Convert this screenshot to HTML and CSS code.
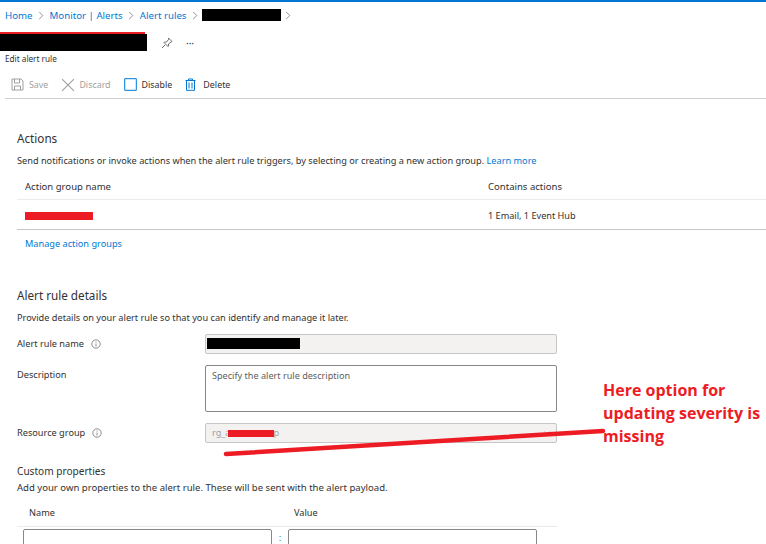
FILE: index.html
```html
<!DOCTYPE html>
<html lang="en">
<head>
<meta charset="utf-8">
<title>Edit alert rule</title>
<link rel="stylesheet" href="styles.css">
</head>
<body>
<div class="page">
  <nav class="crumbs">
    <a>Home</a><svg class="chev" viewBox="0 0 6 10"><path d="M1 1l4 4-4 4"/></svg>
    <a>Monitor | Alerts</a><svg class="chev" viewBox="0 0 6 10"><path d="M1 1l4 4-4 4"/></svg>
    <a>Alert rules</a><svg class="chev" viewBox="0 0 6 10"><path d="M1 1l4 4-4 4"/></svg>
    <span class="black crumb-black"></span><svg class="chev" viewBox="0 0 6 10"><path d="M1 1l4 4-4 4"/></svg>
  </nav>
  <div class="title-row">
    <div class="title-block"><div class="red-line"></div><div class="black title-black"></div></div>
    <svg class="pin" viewBox="0 0 12 12"><path d="M7.500 1l3.500 3.500-1 .5-2.500 2 0 2-.5.5-4-4 .5-.5h2l2-2.500zM4 8L1 11"/></svg>
    <span class="dots">···</span>
  </div>
  <div class="subtitle">Edit alert rule</div>
  <div class="toolbar">
    <span class="tool off"><svg viewBox="0 0 13 13"><path d="M1 1h9l2 2v9H1zM3.500 1v4h5V1M3.500 12V8h6v4"/></svg>Save</span>
    <span class="tool off discard"><svg class="x-icon" viewBox="0 0 13 13"><path d="M1 1l11 11M12 1L1 12"/></svg>Discard</span>
    <span class="tool disable"><svg class="blue" viewBox="0 0 13 13"><path d="M.7.700h11.600v11.600H.7z"/></svg>Disable</span>
    <span class="tool delete"><svg class="blue bin" viewBox="0 0 11 13"><path d="M.5 2.500h10M3.500 2.500V1h4v1.500M1.500 2.500V12.300h8V2.500M4 4.500v6M7 4.500v6"/></svg>Delete</span>
  </div>

  <section class="actions">
    <h2>Actions</h2>
    <p class="desc">Send notifications or invoke actions when the alert rule triggers, by selecting or creating a new action group. <a>Learn more</a></p>
    <div class="table-head"><span class="col-a">Action group name</span><span>Contains actions</span></div>
    <div class="table-row"><span class="col-a"><span class="red group-red"></span></span><span>1 Email, 1 Event Hub</span></div>
    <a class="manage">Manage action groups</a>
  </section>

  <section class="details">
    <h2>Alert rule details</h2>
    <p class="desc">Provide details on your alert rule so that you can identify and manage it later.</p>
    <div class="field name-field">
      <label>Alert rule name<svg class="info" viewBox="0 0 10 10"><circle cx="5" cy="5" r="4.200"/><path d="M5 4.500v3M5 2.500v1"/></svg></label>
      <div class="input disabled"><span class="black name-black"></span></div>
    </div>
    <div class="field desc-field">
      <label>Description</label>
      <div class="input area">Specify the alert rule description</div>
    </div>
    <div class="field group-field">
      <label>Resource group<svg class="info" viewBox="0 0 10 10"><circle cx="5" cy="5" r="4.200"/><path d="M5 4.500v3M5 2.500v1"/></svg></label>
      <div class="input disabled muted">rg_a<span class="hidden-part"></span>p<span class="red rg-red"></span><svg class="select-chev" viewBox="0 0 10 6"><path d="M1 1l4 4 4-4"/></svg></div>
    </div>
  </section>

  <section class="custom">
    <h2>Custom properties</h2>
    <p class="desc">Add your own properties to the alert rule. These will be sent with the alert payload.</p>
    <div class="prop-head"><span class="prop-name">Name</span><span>Value</span></div>
    <div class="prop-row"><div class="input prop-a"></div><span class="colon">:</span><div class="input prop-b"></div></div>
  </section>

  <svg class="arrow" viewBox="0 0 766 544"><path d="M226 454L603 431"/></svg>
  <div class="note">Here option for<br>updating severity is<br>missing</div>
</div>
</body>
</html>
```
FILE: styles.css
```css
html, body { margin: 0; padding: 0; background: #fff; }
.page {
  position: relative;
  width: 766px;
  height: 544px;
  overflow: hidden;
  box-sizing: border-box;
  border-top: 2px solid #0078d4;
  font-family: "Noto Sans", "Open Sans", sans-serif;
  font-size: 9.200px;
  color: #323130;
}
a { color: #0078d4; }
h2 { margin: 0; font-size: 11.700px; font-weight: 400; line-height: 16px; }
p { margin: 0; }
.black { background: #000; display: block; }
.red { background: #ed1c24; display: block; position: absolute; }

.crumbs { display: flex; align-items: center; height: 24px; padding: 2px 0 0 5px; box-sizing: border-box; font-size: 9.700px; }
.crumbs a { color: #0078d4; }
.chev { width: 6px; height: 9px; margin: 0 6px 0 5px; fill: none; stroke: #8a8886; stroke-width: 1; }
.crumb-black { width: 79px; height: 12px; margin-left: -2px; }
.crumbs .chev:last-child { margin-left: 4px; }

.title-row { display: flex; align-items: center; height: 21px; margin-top: 5px; }
.title-block { width: 147px; }
.red-line { width: 145px; height: 2px; background: #ed1c24; }
.title-black { height: 17px; }
.pin { width: 12px; height: 12px; margin-left: 14px; fill: none; stroke: #605e5c; stroke-width: .9; margin-top: 3px; }
.dots { margin-left: 13px; font-size: 10px; color: #323130; margin-top: 2px; }
.subtitle { margin: 1px 0 0 5px; font-size: 8.200px; line-height: 12px; }

.toolbar { display: flex; align-items: center; height: 28px; margin: 6px 0 0 5px; width: 761px; padding: 0 0 0 6px; box-sizing: border-box; border-bottom: 1px solid #d2d0ce; gap: 11px; }
.tool { display: flex; align-items: center; gap: 5px; font-size: 8.900px; }
.tool svg { width: 13px; height: 13px; fill: none; stroke: #a19f9d; stroke-width: 1; }
.tool svg.blue { stroke: #0078d4; }
.tool svg.x-icon { width: 14px; height: 14px; }
.tool svg.bin { width: 11px; }
.tool.off { color: #a19f9d; }
.tool.discard { margin-left: 2px; gap: 4px; }
.tool.disable { margin-left: 2px; }
.tool.delete { margin-left: 2px; gap: 7px; }

.actions { margin: 31px 0 0 17px; width: 749px; }
.actions .desc { margin-top: 8px; line-height: 14px; }
.desc { font-size: 9.200px; }
.table-head, .table-row { display: flex; align-items: center; padding-left: 8px; }
.table-head { height: 26px; border-bottom: 1px solid #edebe9; margin-top: 6px; box-sizing: border-box; font-size: 9.550px; }
.table-row { height: 30px; border-bottom: 1px solid #c8c6c4; position: relative; box-sizing: border-box; font-size: 9.150px; padding-top: 1px; }
.col-a { width: 463px; }
.group-red { left: 8px; top: 12px; width: 68px; height: 8px; }
.manage { display: block; margin: 7px 0 0 8px; line-height: 13px; font-size: 9.200px; }

.details { margin: 37px 0 0 17px; width: 540px; }
.details .desc { margin-top: 8px; line-height: 14px; }
.field { display: flex; }
.field label { width: 188px; display: flex; align-items: center; font-size: 9.200px; height: 19px; }
.info { width: 10px; height: 10px; margin-left: 7px; fill: none; stroke: #605e5c; stroke-width: .7; }
.input { box-sizing: border-box; width: 352px; border: 1px solid #8a8886; border-radius: 2px; background: #fff; font-size: 9.100px; }
.input.disabled { background: #f3f2f1; border-color: #c8c6c4; height: 20px; position: relative; }
.name-field { margin-top: 9px; }
.name-black { width: 93px; height: 11px; margin: 3px 0 0 1px; }
.desc-field { margin-top: 11px; }
.desc-field label { height: 18px; }
.area { height: 47px; padding: 1px 6px; line-height: 18px; color: #605e5c; }
.group-field { margin-top: 11px; }
.muted { color: #a19f9d; padding-left: 6px; line-height: 18px; }
.hidden-part { display: inline-block; width: 43px; }
.rg-red { left: 22px; top: 6px; width: 46px; height: 7px; }
.select-chev { position: absolute; right: 5px; top: 6px; width: 8px; height: 5px; fill: none; stroke: #c8c6c4; stroke-width: 1; }

.custom { margin: 20px 0 0 17px; width: 540px; }
.custom h2 { font-size: 10.100px; }
.custom .desc { margin-top: 2px; line-height: 14px; font-size: 9.550px; }
.prop-head { display: flex; align-items: center; height: 29px; border-bottom: 1px solid #edebe9; margin-top: 3px; box-sizing: border-box; font-size: 9.200px; padding-top: 1px; }
.prop-name { width: 277px; padding-left: 12px; box-sizing: border-box; }
.prop-row { display: flex; margin: 2px 0 0 6px; align-items: flex-start; }
.prop-a, .prop-b { height: 40px; width: 249px; }
.colon { width: 16px; text-align: center; line-height: 10px; padding-top: 4px; color: #0078d4; }

.arrow { position: absolute; left: 0; top: -2px; width: 766px; height: 544px; fill: none; stroke: #ed1c24; stroke-width: 4.500; stroke-linecap: round; pointer-events: none; }
.note { position: absolute; left: 603px; top: 377px; font-family: "Open Sans", sans-serif; font-size: 16px; font-weight: 700; line-height: 23px; color: #ed1c24; white-space: nowrap; }
```
